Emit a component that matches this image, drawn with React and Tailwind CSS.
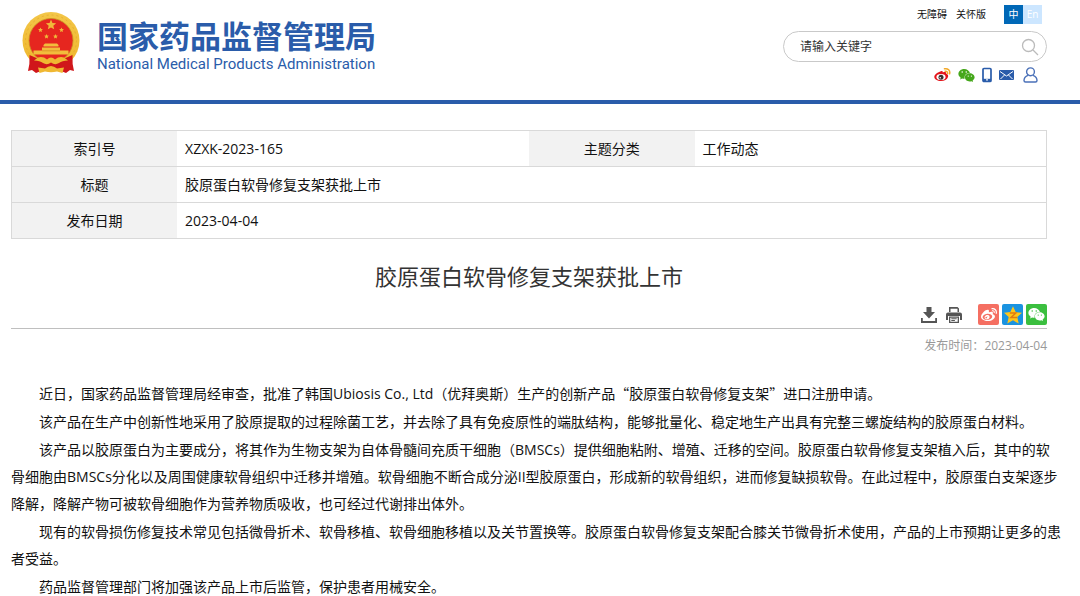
import React, { useState } from "react";
import { FaWeibo, FaWeixin } from "react-icons/fa";

const meta = { index: "XZXK-2023-165", category: "工作动态", title: "胶原蛋白软骨修复支架获批上市", date: "2023-04-04" };

function Star({ cx, cy, r }) {
  const points = Array.from({ length: 10 }, (_, i) => {
    const a = (Math.PI / 5) * i - Math.PI / 2;
    const d = i % 2 ? r * 0.45 : r;
    return `${(cx + d * Math.cos(a)).toFixed(2)},${(cy + d * Math.sin(a)).toFixed(2)}`;
  });
  return <polygon points={points.join(" ")} fill="#f0b93a" />;
}

function Emblem() {
  return (
    <svg viewBox="0 0 60 62" className="h-[62px] w-[60px]" role="img" aria-label="国徽">
      <defs>
        <linearGradient id="gold" x1="0" y1="0" x2="0" y2="1">
          <stop offset="0" stopColor="#f3c648" />
          <stop offset="1" stopColor="#efb72c" />
        </linearGradient>
      </defs>
      <circle cx="30" cy="28.5" r="28.5" fill="url(#gold)" />
      <circle cx="30" cy="28.5" r="25.5" fill="none" stroke="#e3aa2c" strokeWidth="0.8" strokeDasharray="2 3" />
      <circle cx="30" cy="28.5" r="22" fill="#e6261f" stroke="#c98f22" strokeWidth="0.8" />
      <Star cx={30} cy={13} r={5.4} />
      <Star cx={19.5} cy={18} r={2.6} />
      <Star cx={40.5} cy={18} r={2.6} />
      <Star cx={25.500} cy={24.500} r={2.600} />
      <Star cx={34.500} cy={24.500} r={2.600} />
      <path d="M22.500 33l1.500-1.500h12l1.500 1.500v1.500h-15zM21 35.500h18v3h8.500v4h-35v-4H21z" fill="#f2bd3c" />
      <path d="M21 38.800h18" stroke="#d68a22" strokeWidth="0.700" />
      <path d="M8.500 43 Q15 45 21 50 L39 50 Q45 45 51.500 43 Q51 52 53 59 L49 58 L45 61 L40 59 H20 L15 61 L11 58 L7 59 Q9 52 8.500 43Z" fill="#d0161a" />
      <path d="M17 45.500 Q22 44 26 47.500 Q30 43.500 34 47.500 Q38 44 43 45.500 L47 48.500 Q41 48.500 38 51 Q34 53.500 30 50.500 Q26 53.500 22 51 Q19 48.500 13 48.500Z" fill="#f0b832" />
      <path d="M17 55.500 L24 56.500 Q30 51.500 36 56.500 L43 55.500 L41.500 61 L36 59.500 Q30 61 24 59.500 L18.500 61Z" fill="#f0b832" />
    </svg>
  );
}

function WeiboColor() {
  return (
    <svg viewBox="0 0 17 16" className="h-4 w-[17px]">
      <path d="M6.200 4.500C7.700 3.500 9 4 8.800 5.400c2-.8 3.800-.5 3.400 1.300 1.700.5 2.300 1.700 1.800 3.200-.7 2.500-3.600 4.100-7 4.100C3.300 14 .3 12.300.3 9.800c0-1.900 3-4.400 5.900-5.300z" fill="#e3141a" />
      <ellipse cx="7" cy="10" rx="4.600" ry="3.100" fill="#fff" />
      <circle cx="7" cy="10.200" r="2.500" fill="#3a3030" />
      <circle cx="6.200" cy="10.800" r="0.800" fill="#fff" />
      <path d="M10.500 1.800c3.400-.8 6 1.800 5.100 5M11.100 4.200c1.600-.3 2.800.9 2.400 2.400" fill="none" stroke="#f3a928" strokeWidth="1.500" strokeLinecap="round" />
    </svg>
  );
}

function Phone() {
  return (
    <svg viewBox="0 0 10 16" className="h-4 w-2.5">
      <rect x="1" y="1.500" width="8" height="13" rx="1" fill="#fff" stroke="#2a5caa" strokeWidth="1.700" />
      <path d="M1 11.800h8v2.700H1z" fill="#2a5caa" />
      <circle cx="5" cy="12.800" r="0.900" fill="#fff" />
    </svg>
  );
}

function Mail() {
  return (
    <svg viewBox="0 0 15 12" className="h-3 w-[15px]">
      <rect x="0" y="1" width="15" height="10" rx="1" fill="#2a5caa" />
      <path d="M1 2.500l6.500 4.500L14 2.500M1.500 10l4-4M13.500 10l-4-4" fill="none" stroke="#fff" strokeWidth="1" />
    </svg>
  );
}

function User() {
  return (
    <svg viewBox="0 0 15 16" className="h-4 w-[15px]" fill="none" stroke="#4a70b8" strokeWidth="1.400">
      <circle cx="7.500" cy="4.800" r="3.900" />
      <path d="M5 8.300C2.500 9.300 1 11.300 1 13.500c0 1 .5 1.500 1.500 1.500h10c1 0 1.500-.5 1.500-1.500 0-2.200-1.500-4.200-4-5.200" />
    </svg>
  );
}

function Download() {
  return (
    <svg viewBox="0 0 16 16" className="size-4" fill="#555">
      <path d="M5.500 0h5v5h3.500L8 11.500 2 5h3.500z" />
      <path d="M0 11h1.800v3h12.400v-3H16v5H0z" />
    </svg>
  );
}

function Printer() {
  return (
    <svg viewBox="0 0 16 16" className="size-4" fill="#555">
      <path d="M3 0h8.500L13 1.500V5h-1.500V1.800h-7V5H3z" />
      <path d="M2 5.500h12a2 2 0 0 1 2 2V13h-2V9H2v4H0V7.500a2 2 0 0 1 2-2z" />
      <path d="M3 9.500h10V16H3zm1.300 1.200v4h7.400v-4z" fillRule="evenodd" />
      <path d="M5.300 11.300h5.400v1H5.300zM5.300 13.100h3.600v1H5.300z" />
    </svg>
  );
}

function Qzone() {
  return (
    <svg viewBox="0 0 20 20" className="size-5">
      <path d="M10 1.200l2.700 5.900 6.300.7-4.700 4.300 1.400 6.500L10 15.200l-5.700 3.400 1.400-6.500L1 7.800l6.300-.7z" fill="#fec61b" />
      <path d="M6.800 8h6L8 12.500h6" fill="none" stroke="#e07b12" strokeWidth="1.500" />
    </svg>
  );
}

function Header() {
  const [keyword, setKeyword] = useState("");

  return (
    <header className="flex h-[104px] items-start justify-between border-b-4 border-[#2a5caa] pr-[33px] pl-[21px]">
      <a href="#" className="flex items-end gap-4 pt-3">
        <Emblem />
        <span className="flex flex-col text-[#2a5caa]">
          <span className="text-[31px] leading-9 font-bold">国家药品监督管理局</span>
          <span className="font-['Roboto'] text-[15px] leading-5">National Medical Products Administration</span>
        </span>
      </a>

      <div className="flex w-[264px] flex-col items-end">
        <nav className="mt-[5px] mr-[5px] flex h-[19px] items-center text-[10px]">
          <a href="#" className="mr-[9px]">无障碍</a>
          <a href="#" className="mr-[18px]">关怀版</a>
          <a href="#" className="flex size-[19px] items-center justify-center bg-[#0068b7] text-white">中</a>
          <a href="#" className="flex size-[19px] items-center justify-center bg-[#cce6ff] text-white">En</a>
        </nav>
        <form onSubmit={(e) => e.preventDefault()} className="mt-[7px] flex h-[31px] w-full items-center rounded-full border border-[#c9c9c9] pr-[7px] pl-4">
          <input
            aria-label="请输入关键字"
            className="min-w-0 flex-1 text-xs outline-none placeholder:text-[#333]"
            value={keyword}
            onChange={(e) => setKeyword(e.target.value)}
            placeholder="请输入关键字"
          />
          <button type="submit" aria-label="搜索">
            <svg viewBox="0 0 18 18" className="size-[18px]" fill="none" stroke="#bbb" strokeWidth="1.300">
              <circle cx="7.500" cy="7.500" r="6" />
              <path d="M12 12l5 5" />
            </svg>
          </button>
        </form>
        <nav className="mt-[5px] mr-[9px] flex h-4 items-center gap-[7px]">
          <a href="#" aria-label="微博"><WeiboColor /></a>
          <a href="#" aria-label="微信"><FaWeixin className="size-[17px] text-[#45a71b]" /></a>
          <a href="#" aria-label="移动端"><Phone /></a>
          <a href="#" aria-label="邮箱"><Mail /></a>
          <a href="#" aria-label="用户" className="ml-0.5"><User /></a>
        </nav>
      </div>
    </header>
  );
}

function MetaTable() {
  const label = "bg-[#f2f2f2] font-normal";
  const row = "h-[36px] border-t border-[#d9d9d9]";

  return (
    <table className="w-full table-fixed border-collapse border border-[#d9d9d9] text-sm">
      <colgroup>
        <col className="w-[16%]" />
        <col className="w-[34%]" />
        <col className="w-[16%]" />
        <col className="w-[34%]" />
      </colgroup>
      <tbody>
        <tr className={row}>
          <th scope="row" className={label}>索引号</th>
          <td className="px-2">{meta.index}</td>
          <th scope="row" className={label}>主题分类</th>
          <td className="px-2">{meta.category}</td>
        </tr>
        <tr className={row}>
          <th scope="row" className={label}>标题</th>
          <td className="px-2" colSpan={3}>{meta.title}</td>
        </tr>
        <tr className={row}>
          <th scope="row" className={label}>发布日期</th>
          <td className="px-2" colSpan={3}>{meta.date}</td>
        </tr>
      </tbody>
    </table>
  );
}

export default function App() {
  return (
    <div className="bg-white font-['Open_Sans','Noto_Sans_CJK_SC',sans-serif] text-[#111]">
      <Header />
      <main className="pt-[26px] pr-[33px] pl-[11px]">
        <MetaTable />

        <h1 className="mt-[19px] text-center text-[22px] leading-9 text-[#333]">{meta.title}</h1>

        <div className="mt-[10px] flex items-center justify-end border-b border-[#bfbfbf] pb-[3px]">
          <button aria-label="下载" className="mr-[9px]"><Download /></button>
          <button aria-label="打印" className="mr-4"><Printer /></button>
          <div className="flex gap-[3px]">
            <a href="#" aria-label="分享到微博" className="flex size-[21px] items-center justify-center rounded-xs bg-[#f56f62] text-white"><FaWeibo className="size-4" /></a>
            <a href="#" aria-label="分享到QQ空间" className="flex size-[21px] items-center justify-center rounded-xs bg-[#1a93e0]"><Qzone /></a>
            <a href="#" aria-label="分享到微信" className="flex size-[21px] items-center justify-center rounded-xs bg-[#3bbf3f] text-white"><FaWeixin className="size-[17px]" /></a>
          </div>
        </div>
        <p className="mt-[7px] text-right text-xs leading-5 text-[#999]">发布时间：{meta.date}</p>

        {/* a full line holds 75 characters, so the text runs slightly into the right padding */}
        <article className="mt-6 -mr-4 space-y-px indent-7 text-sm leading-[27px]">
          <p>近日，国家药品监督管理局经审查，批准了韩国Ubiosis Co., Ltd（优拜奥斯）生产的创新产品<span className="font-['Noto_Sans_CJK_SC']">“</span>胶原蛋白软骨修复支架<span className="font-['Noto_Sans_CJK_SC']">”</span>进口注册申请。</p>
          <p>该产品在生产中创新性地采用了胶原提取的过程除菌工艺，并去除了具有免疫原性的端肽结构，能够批量化、稳定地生产出具有完整三螺旋结构的胶原蛋白材料。</p>
          <p>该产品以胶原蛋白为主要成分，将其作为生物支架为自体骨髓间充质干细胞（BMSCs）提供细胞粘附、增殖、迁移的空间。胶原蛋白软骨修复支架植入后，其中的软骨细胞由BMSCs分化以及周围健康软骨组织中迁移并增殖。软骨细胞不断合成分泌II型胶原蛋白，形成新的软骨组织，进而修复缺损软骨。在此过程中，胶原蛋白支架逐步降解，降解产物可被软骨细胞作为营养物质吸收，也可经过代谢排出体外。</p>
          <p>现有的软骨损伤修复技术常见包括微骨折术、软骨移植、软骨细胞移植以及关节置换等。胶原蛋白软骨修复支架配合膝关节微骨折术使用，产品的上市预期让更多的患者受益。</p>
          <p>药品监督管理部门将加强该产品上市后监管，保护患者用械安全。</p>
        </article>
      </main>
    </div>
  );
}
